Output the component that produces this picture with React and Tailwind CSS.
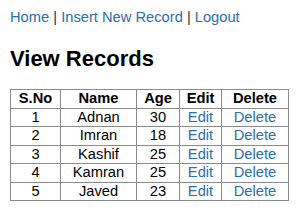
import React from 'react';

const records = [
  { id: 1, name: 'Adnan', age: 30 },
  { id: 2, name: 'Imran', age: 18 },
  { id: 3, name: 'Kashif', age: 25 },
  { id: 4, name: 'Kamran', age: 25 },
  { id: 5, name: 'Javed', age: 23 },
];

function App() {
  return (
    <div className="min-h-[216px] bg-white pl-[10px] pt-[9px] font-['Liberation_Sans',Arial,sans-serif] text-black">
      {/* Nav links */}
      <p className="text-[14.7px] leading-[17px]">
        <a href="#" className="text-[#2a6eb0]">Home</a>
        <span className="text-[#333]"> | </span>
        <a href="#" className="text-[#2a6eb0]">Insert New Record</a>
        <span className="text-[#333]"> | </span>
        <a href="#" className="text-[#2a6eb0]">Logout</a>
      </p>

      <h2 className="mt-[20px] text-[22px] font-bold leading-[25px]">View Records</h2>

      <table className="mt-[18px] border-collapse border border-[#8a8a8a] text-center text-[14.7px] leading-[17px]">
        <thead>
          <tr className="h-[18.5px]">
            <th className="w-[50px] border border-[#8a8a8a] p-0">S.No</th>
            <th className="w-[76px] border border-[#8a8a8a] p-0">Name</th>
            <th className="w-[43px] border border-[#8a8a8a] p-0">Age</th>
            <th className="w-[42px] border border-[#8a8a8a] p-0">Edit</th>
            <th className="w-[67px] border border-[#8a8a8a] p-0">Delete</th>
          </tr>
        </thead>
        <tbody>
          {records.map((r) => (
            <tr key={r.id} className="h-[18.5px]">
              <td className="border border-[#8a8a8a] p-0">{r.id}</td>
              <td className="border border-[#8a8a8a] p-0">{r.name}</td>
              <td className="border border-[#8a8a8a] p-0">{r.age}</td>
              <td className="border border-[#8a8a8a] p-0">
                <a href="#" className="text-[#2a6eb0]">Edit</a>
              </td>
              <td className="border border-[#8a8a8a] p-0">
                <a href="#" className="text-[#2a6eb0]">Delete</a>
              </td>
            </tr>
          ))}
        </tbody>
      </table>
    </div>
  );
}

export default App;
